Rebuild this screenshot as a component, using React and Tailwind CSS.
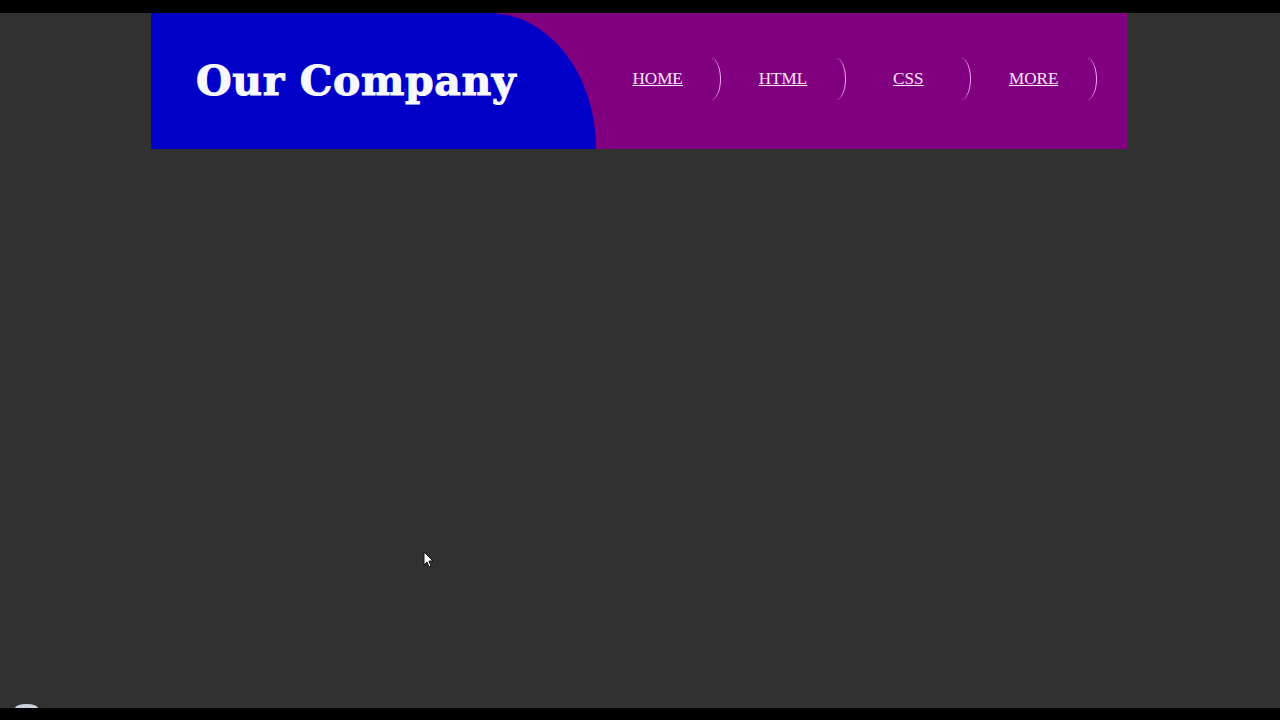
const navItems = ["HOME", "HTML", "CSS", "MORE"];

function App() {
  return (
    <div className="relative flex h-screen flex-col overflow-hidden bg-black">
      <div className="h-[13px]" />
      <div className="flex-1 bg-[#313131]">
        <header className="ml-[151px] flex h-[135.5px] w-[977px] bg-[#800080]">
          <div className="flex w-[444.5px] items-center rounded-tr-[107px_135px] bg-[#0000c8] pt-[1px] pl-[45px]">
            <h1 className="font-['DejaVu_Serif',serif] text-[41px] leading-none font-bold tracking-[0.6px] text-[#f8f8ff] [-webkit-text-stroke:1px_#f8f8ff]">
              Our Company
            </h1>
          </div>
          <nav className="flex items-center pb-[4px]">
            {navItems.map((item) => (
              <div
                key={item}
                className="flex h-[42px] w-[125.33px] items-center justify-center rounded-r-[10px_21px] border-r border-[#f4a8f4]"
              >
                <a
                  href="#"
                  className="font-['Liberation_Serif',serif] text-[17.1px] text-[#fbe8fb] underline"
                >
                  {item}
                </a>
              </div>
            ))}
          </nav>
        </header>
      </div>
      <div className="h-[12px]" />

      {/* dome peeking over the bottom bar */}
      <div className="absolute bottom-[12px] left-[15px] h-[4px] w-[23px] rounded-t-[11px_4px] bg-[#c8d2dc]" />

      {/* mouse pointer */}
      <svg
        className="absolute top-[551px] left-[423px]"
        width="11"
        height="17"
        viewBox="0 0 11 17"
      >
        <path
          d="M1 1v13l3-3 2 5 2-1-2-5h4z"
          fill="#fff"
          stroke="#111"
          strokeWidth="1"
        />
      </svg>
    </div>
  );
}

export default App;
